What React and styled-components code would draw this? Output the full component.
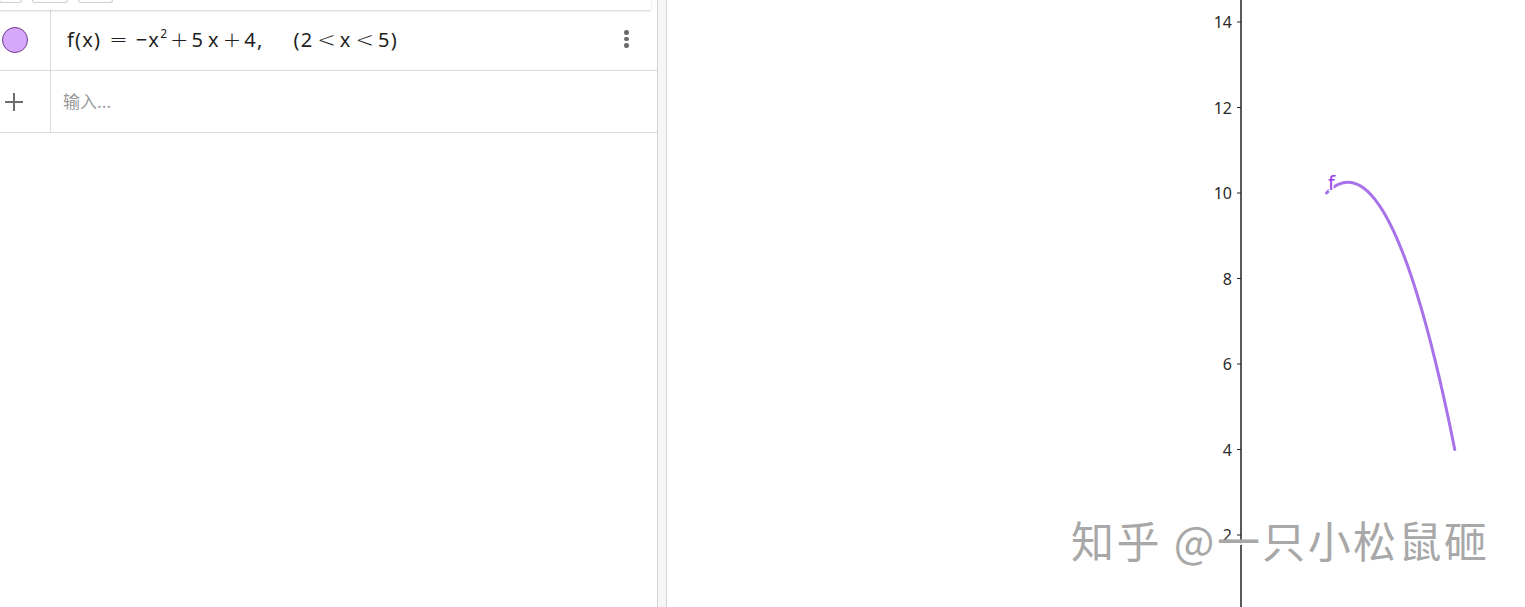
import React from "react";
import styled, { createGlobalStyle } from "styled-components";

const GlobalStyle = createGlobalStyle`
  html, body {
    margin: 0;
    padding: 0;
    background: #fff;
    overflow: hidden;
  }
  body {
    font-family: "Noto Sans", "Noto Sans CJK SC", sans-serif;
  }
`;

const SCALE = 42.75;
const ORIGIN_X = 574;
const ORIGIN_Y = 620.5;

const f = (x) => -x * x + 5 * x + 4;

const curvePath = () => {
  const pts = [];
  for (let i = 0; i <= 120; i++) {
    const x = 2 + (3 * i) / 120;
    pts.push(
      `${(ORIGIN_X + x * SCALE).toFixed(2)},${(ORIGIN_Y - f(x) * SCALE).toFixed(2)}`
    );
  }
  return "M" + pts.join(" L");
};

const ticks = [2, 4, 6, 8, 10, 12, 14];

const App = () => {
  return (
    <>
      <GlobalStyle />
      <Page>
        <AlgebraPanel>
          <Header>
            <TabStub w={23} />
            <TabStub w={36} />
            <TabStub w={35} />
          </Header>
          <Row h={60}>
            <Marker>
              <ColorDot />
            </Marker>
            <Formula>
              f(x)
              <Op space={8}>=</Op>
              −x<Sup>2</Sup>
              <Op space={3}>+</Op>5<Thin />x
              <Op space={3}>+</Op>4,
              <Gap />
              (2
              <Op space={4}>&lt;</Op>x
              <Op space={4}>&lt;</Op>5)
            </Formula>
            <MoreButton>
              <span />
              <span />
              <span />
            </MoreButton>
          </Row>
          <Row h={61}>
            <Marker>
              <PlusIcon viewBox="0 0 18 18">
                <path d="M9 0v18M0 9h18" stroke="#6e6e6e" strokeWidth="2" />
              </PlusIcon>
            </Marker>
            <Placeholder>输入...</Placeholder>
          </Row>
        </AlgebraPanel>
        <Splitter />
        <GraphicsPanel>
          <Plot width="858" height="607">
            <line
              x1={ORIGIN_X}
              y1="0"
              x2={ORIGIN_X}
              y2="607"
              stroke="#222"
              strokeWidth="1.5"
            />
            {ticks.map((t) => {
              const y = ORIGIN_Y - t * SCALE;
              return (
                <g key={t}>
                  <line
                    x1={ORIGIN_X - 4}
                    y1={y}
                    x2={ORIGIN_X}
                    y2={y}
                    stroke="#222"
                    strokeWidth="1"
                  />
                  <TickLabel x={ORIGIN_X - 9} y={y + 6} textAnchor="end">
                    {t}
                  </TickLabel>
                </g>
              );
            })}
            <path
              d={curvePath()}
              fill="none"
              stroke="#a872ea"
              strokeWidth="3"
              strokeLinecap="round"
            />
            <CurveLabel x="661" y="190">
              f
            </CurveLabel>
          </Plot>
          <Watermark>知乎 @一只小松鼠砸</Watermark>
        </GraphicsPanel>
      </Page>
    </>
  );
};

export default App;

const Page = styled.div`
  display: flex;
  width: 1525px;
  height: 607px;
  overflow: hidden;
`;

const AlgebraPanel = styled.div`
  width: 657px;
  flex-shrink: 0;
  display: flex;
  flex-direction: column;
  background: #fff;
`;

const Header = styled.div`
  height: 10px;
  display: flex;
  gap: 10px;
  align-items: flex-start;
  margin-left: -1px;
  margin-right: 6px;
  box-shadow: 0 1px 2px rgba(0, 0, 0, 0.18);
  position: relative;
  z-index: 1;
`;

const TabStub = styled.div`
  box-sizing: border-box;
  width: ${(p) => p.w}px;
  height: 3px;
  border: 1px solid #d0d0d0;
  border-top: none;
  border-radius: 0 0 3px 3px;
`;

const Row = styled.div`
  display: flex;
  align-items: center;
  height: ${(p) => p.h}px;
  border-bottom: 1px solid #dcdcdc;
`;

const Marker = styled.div`
  width: 51px;
  align-self: stretch;
  border-right: 1px solid #dcdcdc;
  display: flex;
  align-items: center;
  padding-left: 2px;
  box-sizing: border-box;
`;

const ColorDot = styled.div`
  width: 24px;
  height: 24px;
  border-radius: 50%;
  background: #d6a8fc;
  border: 1px solid #6f3a8e;
`;

const PlusIcon = styled.svg`
  width: 18px;
  height: 18px;
  margin-left: 3px;
`;

const Formula = styled.div`
  flex: 1;
  display: flex;
  align-items: baseline;
  padding-left: 16px;
  font-family: "Noto Sans", "DejaVu Sans", sans-serif;
  font-size: 20px;
  letter-spacing: 1.2px;
  color: #1e1e1e;
  white-space: pre;
  padding-bottom: 1px;
`;

const Op = styled.span`
  font-family: "DejaVu Sans", sans-serif;
  font-size: 22px;
  font-weight: 200;
  letter-spacing: 0;
  margin: 0 ${(p) => p.space}px;
`;

const Thin = styled.span`
  display: inline-block;
  width: 4px;
`;

const Sup = styled.span`
  font-size: 12px;
  letter-spacing: 0;
  position: relative;
  top: -9px;
`;

const Gap = styled.span`
  display: inline-block;
  width: 30px;
`;

const MoreButton = styled.div`
  width: 6px;
  display: flex;
  flex-direction: column;
  gap: 2px;
  margin-right: 27px;
  margin-top: -2px;

  span {
    width: 4.5px;
    height: 4.5px;
    border-radius: 50%;
    background: #6b6b6b;
  }
`;

const Placeholder = styled.div`
  padding-left: 12px;
  font-family: "Noto Sans CJK SC", sans-serif;
  font-size: 17px;
  color: #9a9a9a;
  padding-bottom: 3px;
`;

const Splitter = styled.div`
  width: 8px;
  flex-shrink: 0;
  background: #f6f6f6;
  border-left: 1px solid #d4d4d4;
  border-right: 1px solid #d4d4d4;
`;

const GraphicsPanel = styled.div`
  flex: 1;
  position: relative;
  background: #fff;
`;

const Plot = styled.svg`
  display: block;
`;

const TickLabel = styled.text`
  font-family: "Noto Sans", sans-serif;
  font-size: 16px;
  fill: #2a2a2a;
`;

const CurveLabel = styled.text`
  font-family: "Noto Sans", sans-serif;
  font-size: 20px;
  fill: #9440ea;
  stroke: #fff;
  stroke-width: 3px;
  paint-order: stroke;
`;

const Watermark = styled.div`
  position: absolute;
  left: 404px;
  top: 508px;
  font-family: "Noto Sans CJK SC", sans-serif;
  font-size: 43px;
  letter-spacing: 2.4px;
  color: #a8a8a8;
  white-space: nowrap;
  text-shadow: 2px 2px 0 rgba(255, 255, 255, 0.9);
  pointer-events: none;
`;
